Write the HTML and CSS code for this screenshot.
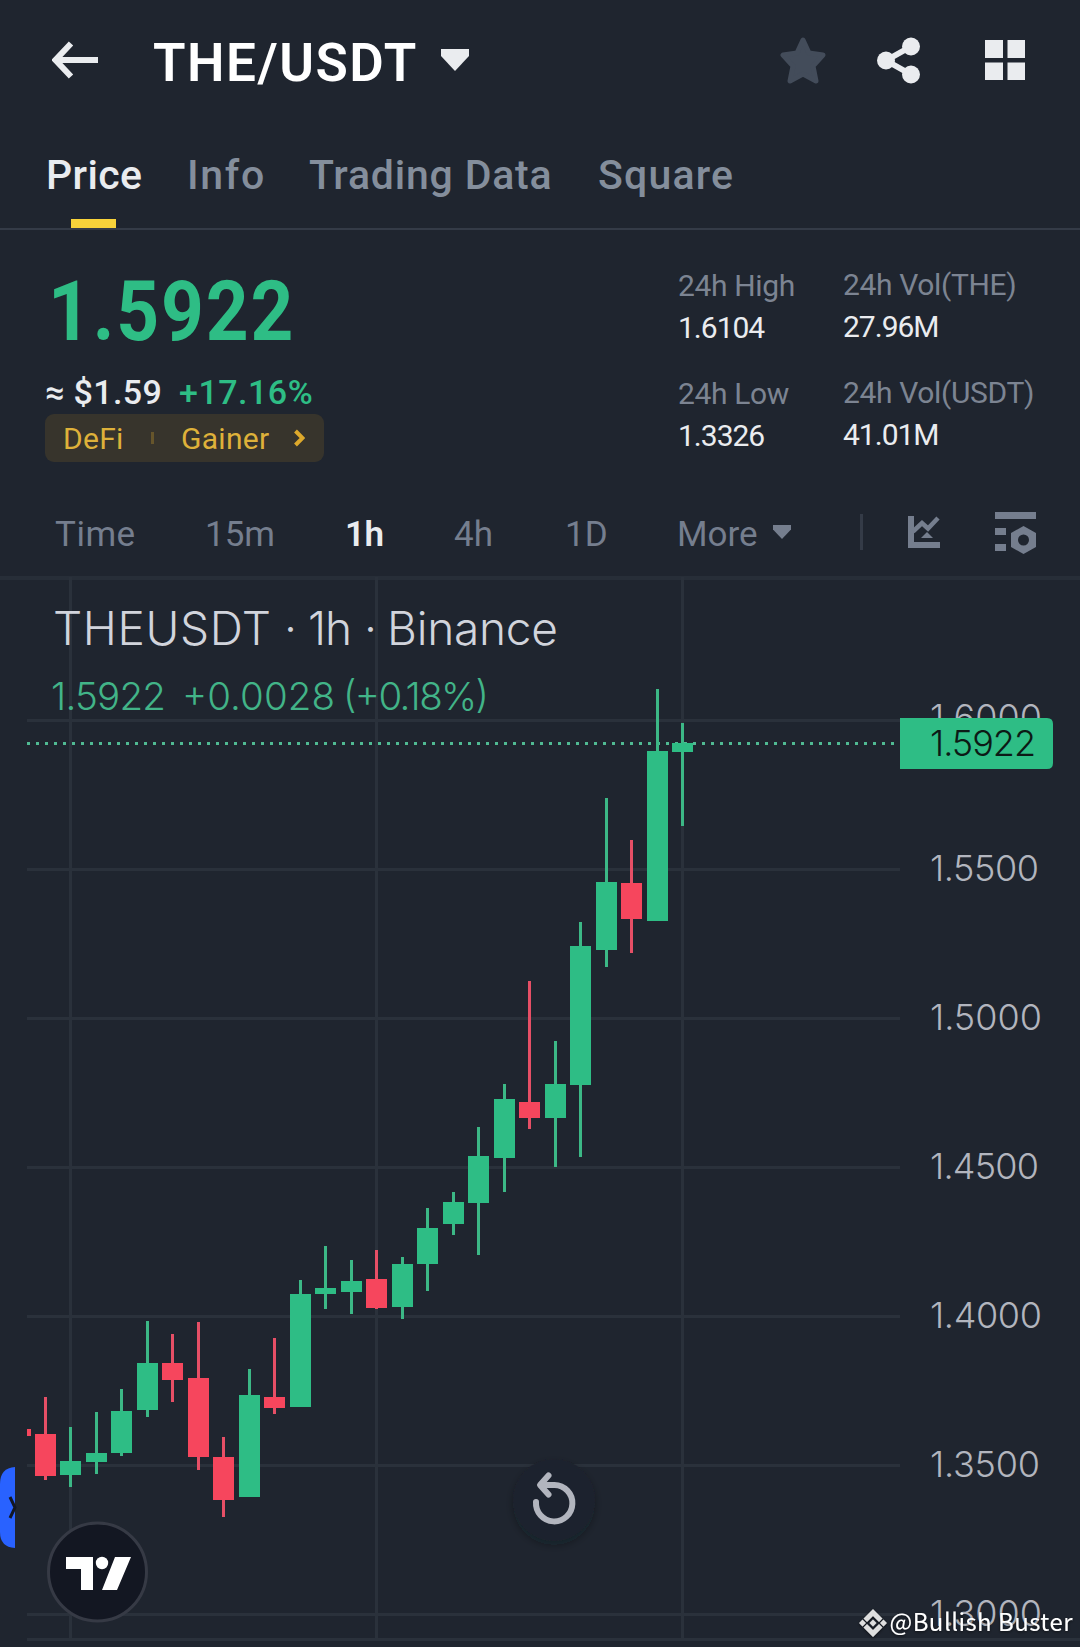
FILE: index.html
```html
<!DOCTYPE html>
<html lang="en">
<head>
<meta charset="utf-8">
<title>THE/USDT</title>
<link rel="stylesheet" href="styles.css">
</head>
<body>
<main class="app">
  <header class="topbar">
    <svg class="back" viewBox="0 0 46 38" width="46" height="38"><path d="M46 19H5M19 2.500L3.500 19L19 35.500" fill="none" stroke="#eaecef" stroke-width="6"/></svg>
    <h1 class="pair">THE/USDT</h1>
    <svg class="caret" viewBox="0 0 28 22" width="28" height="22"><path d="M0 0H28V7L14 22L0 7Z" fill="#eaecef"/></svg>
    <svg class="star" viewBox="0 0 46 48" width="46" height="48"><path d="M23 3L29 16L43 18L33 29L36 44L23 37L10 44L13 29L3 18L17 16Z" fill="#434c5a" stroke="#434c5a" stroke-width="5" stroke-linejoin="round"/></svg>
    <svg class="share" viewBox="0 0 43 47" width="43" height="47"><g fill="#eaecef"><path d="M9 23.500L34 9.500M9 23.500L34 37.500" stroke="#eaecef" stroke-width="6"/><circle cx="9" cy="23.500" r="9"/><circle cx="34" cy="9.500" r="9"/><circle cx="34" cy="37.500" r="9"/></g></svg>
    <svg class="grid" viewBox="0 0 40 40" width="40" height="40"><path d="M0 0H18V18H0ZM22.500 0H40V18H22.500ZM0 22.500H18V40H0ZM22.500 22.500H40V40H22.500Z" fill="#eaecef"/></svg>
  </header>

  <nav class="tabs">
    <a class="tab active">Price</a>
    <a class="tab info">Info</a>
    <a class="tab data">Trading Data</a>
    <a class="tab square">Square</a>
  </nav>

  <section class="summary">
    <div class="quote">
      <div class="last">1.5922</div>
      <div class="change"><span class="fiat">≈ $1.59</span><span class="percent">+17.16%</span></div>
      <div class="tags">
        <span class="defi">DeFi</span><i class="tag-sep"></i><span class="gainer">Gainer</span>
        <svg class="chev" viewBox="0 0 11 18" width="11" height="18"><path d="M1.500 2L8.500 9L1.500 16" fill="none" stroke="#dda92c" stroke-width="4"/></svg>
      </div>
    </div>
    <dl class="stats">
      <div><dt>24h High</dt><dd>1.6104</dd></div>
      <div class="vol"><dt>24h Vol(THE)</dt><dd>27.96M</dd></div>
      <div><dt>24h Low</dt><dd>1.3326</dd></div>
      <div class="vol"><dt>24h Vol(USDT)</dt><dd>41.01M</dd></div>
    </dl>
  </section>

  <nav class="intervals">
    <span class="time">Time</span><span>15m</span><span class="selected">1h</span><span>4h</span><span>1D</span>
    <span class="more">More <svg viewBox="0 0 18 14" width="18" height="14"><path d="M0 0H18V4.500L9 14L0 4.500Z" fill="#757e8e"/></svg></span>
    <i class="rule"></i>
    <svg class="draw" viewBox="0 0 32 32" width="32" height="32"><g fill="#757e8e"><path d="M0 0H6V26H32V32H0Z"/><path d="M5 15.500L14 7L20 12.500L30 2" fill="none" stroke="#757e8e" stroke-width="4.500"/><path d="M13 22L19 16L25 22Z"/></g></svg>
    <svg class="prefs" viewBox="0 0 41 42" width="41" height="42"><path fill="#757e8e" fill-rule="evenodd" d="M0 0H41V7H0ZM0 16H11V23H0ZM0 32H11V39H0ZM28.500 14L41 21V35L28.500 42L16 35V21ZM28.500 22.500A5.500 5.500 0 1 0 28.500 33.500A5.500 5.500 0 1 0 28.500 22.500Z"/></svg>
  </nav>

  <section class="chart">
    <svg class="plot" viewBox="0 576 1080 1071" width="1080" height="1071">
      <defs>
        <filter id="lift" x="-40%" y="-40%" width="180%" height="180%"><feDropShadow dx="0" dy="4" stdDeviation="4" flood-color="#10141c" flood-opacity=".35"/></filter>
        <filter id="ink" x="-10%" y="-20%" width="120%" height="150%"><feDropShadow dx="0" dy="1" stdDeviation="1.500" flood-color="#000" flood-opacity=".6"/></filter>
      </defs>
      <g class="gridlines">
        <path class="frame" d="M0 578H1080"/>
        <path d="M70.500 577V1638M376.500 577V1638M682.500 577V1638"/>
        <path d="M27 720.500H900M27 869.500H900M27 1018.500H900M27 1167.500H900M27 1316.500H900M27 1465.500H900M27 1614.500H900M27 1639.500H1080"/>
      </g>
      <g class="labels">
        <text x="930" y="730" textLength="112">1.6000</text>
        <text x="930" y="881" textLength="109">1.5500</text>
        <text x="930" y="1030" textLength="112">1.5000</text>
        <text x="930" y="1179" textLength="109">1.4500</text>
        <text x="930" y="1328" textLength="112">1.4000</text>
        <text x="930" y="1477" textLength="110">1.3500</text>
        <text x="930" y="1626" textLength="112">1.3000</text>
      </g>
      <path class="last-line" d="M27 743.500H895"/>
      <g class="wicks up">
        <path d="M70.500 1427V1487M96.500 1412V1474M121.500 1389V1456M147.500 1321V1417M249.500 1369V1400M300.500 1280V1300M325.500 1246V1309M351.500 1260V1314M402.500 1257V1319M427.500 1208V1291M453.500 1192V1235M478.500 1127V1255M504.500 1084V1192M555.500 1041V1167M580.500 922V1157M606.500 798V967M657.500 689V760M682.500 723V826"/>
      </g>
      <g class="wicks down">
        <path d="M45.500 1397V1480M172.500 1334V1402M198.500 1322V1470M223.500 1437V1517M274.500 1338V1414M376.500 1250V1309M529.500 981V1129M631.500 840V953"/>
      </g>
      <path class="body-up" d="M60 1461h21v14h-21zM86 1453h21v9h-21zM111 1411h21v42h-21zM137 1363h21v47h-21zM239 1395h21v102h-21zM290 1294h21v113h-21zM315 1288h21v6h-21zM341 1281h21v11h-21zM392 1264h21v43h-21zM417 1228h21v36h-21zM443 1202h21v22h-21zM468 1156h21v47h-21zM494 1099h21v59h-21zM545 1084h21v34h-21zM570 946h21v139h-21zM596 882h21v68h-21zM647 751h21v170h-21zM672 743h21v9h-21z"/>
      <path class="body-down" d="M27 1429h4v7h-4zM35 1434h21v42h-21zM162 1363h21v17h-21zM188 1378h21v79h-21zM213 1457h21v43h-21zM264 1397h21v11h-21zM366 1279h21v29h-21zM519 1102h21v16h-21zM621 883h21v36h-21z"/>
      <g class="title">
        <text x="53" y="645" textLength="218">THEUSDT</text>
        <text x="284" y="645">·</text>
        <text x="308" y="645" textLength="44">1h</text>
        <text x="364" y="645">·</text>
        <text x="387" y="645" textLength="171">Binance</text>
      </g>
      <g class="ohlc">
        <text x="51" y="710" textLength="115">1.5922</text>
        <text x="182" y="710" textLength="153">+0.0028</text>
        <text x="343" y="710" textLength="146">(+0.18%)</text>
      </g>
      <path d="M900 718H1047Q1053 718 1053 724V763Q1053 769 1047 769H900Z" fill="#2ebd85"/>
      <text class="badge" x="930" y="756" textLength="106">1.5922</text>
      <path d="M15 1467Q0 1468 0 1484V1532Q0 1547 15 1548Z" fill="#2962ff"/>
      <path d="M10 1497L15 1507.500L10 1518" fill="none" stroke="#131722" stroke-width="3"/>
      <circle cx="97.500" cy="1572" r="49" fill="#131722" stroke="#363a45" stroke-width="3"/>
      <path d="M66 1557H93V1590H81V1569H66ZM115 1557H131L117 1590H102Z" fill="#fff"/><circle cx="102" cy="1563" r="6.200" fill="#fff"/>
      <circle cx="554" cy="1500" r="41" fill="#1e222d" filter="url(#lift)"/>
      <path d="M536 1502A18.200 18.200 0 1 0 554.500 1485H541M548.500 1475.500L540 1485L548.500 1494.500" fill="none" stroke="#b2b5be" stroke-width="6" stroke-linecap="round" stroke-linejoin="round"/>
      <g filter="url(#ink)">
        <g transform="translate(873 1623)" fill="#dedede"><path d="M0 -14L9.500 -4.500L6 -1L0 -7L-6 -1L-9.500 -4.500ZM0 14L9.500 4.500L6 1L0 7L-6 1L-9.500 4.500ZM-14 0L-10.500 -3.500L-7 0L-10.500 3.500ZM14 0L10.500 -3.500L7 0L10.500 3.500ZM0 -3.500L3.500 0L0 3.500L-3.500 0Z"/></g>
        <text class="author" x="889.500" y="1631" textLength="183">@Bullish Buster</text>
      </g>
    </svg>
  </section>
</main>
</body>
</html>
```
FILE: styles.css
```css
* { box-sizing: border-box; }
body { margin: 0; background: #1f252f; font-family: Roboto, "Liberation Sans", sans-serif; color: #eaecef; }
.app { width: 1080px; height: 1647px; overflow: hidden; }
svg { display: block; flex: none; }

.topbar { display: flex; align-items: center; height: 120px; padding: 0 55px 0 52px; }
.pair { margin: 5px 0 0 55px; width: 265px; font-size: 53px; font-weight: 600; line-height: 60px; letter-spacing: 1.500px; color: #fff; white-space: nowrap; }
.caret { margin-left: 23px; }
.star { margin: 2px 0 0 311px; }
.share { margin-left: 51px; }
.grid { margin-left: auto; }

.tabs { display: grid; grid-template-columns: 140px 123px 288px auto; height: 110px; padding: 27px 0 0 46px; border-bottom: 2px solid #343b47; }
.tab { position: relative; font-size: 41px; font-weight: 500; line-height: 56px; color: #848e9c; white-space: nowrap; }
.active { color: #eaecef; letter-spacing: 0.4px; }
.info { padding-left: 1px; letter-spacing: 1.700px; }
.data { letter-spacing: 0.800px; }
.square { padding-left: 1px; letter-spacing: 1.200px; }
.active::after { content: ""; position: absolute; left: 25px; top: 72px; width: 45px; height: 9px; background: #f8d33a; }

.summary { display: flex; justify-content: space-between; height: 256px; padding: 0 0 0 45px; }
.quote { padding-top: 37px; }
.last { height: 86px; margin-left: 3px; font-size: 83px; font-weight: 700; line-height: 90px; letter-spacing: 2.100px; color: #2ebd85; transform: scaleX(0.9); transform-origin: 0 0; }
.change { display: flex; gap: 17px; height: 61px; padding-top: 17px; font-size: 34px; font-weight: 500; line-height: 44px; letter-spacing: 0.350px; white-space: nowrap; }
.percent { color: #2ebd85; letter-spacing: 0.500px; }
.tags { display: flex; align-items: center; width: 279px; height: 48px; padding-left: 18px; border-radius: 9px; background: #37342c; color: #deb13a; font-size: 30px; line-height: 46px; letter-spacing: 0.300px; }
.tags span { padding-top: 2px; }
.defi { width: 88px; }
.tag-sep { width: 3px; height: 12px; background: #66552b; }
.gainer { width: 113px; margin-left: 27px; }
.stats { display: grid; grid-template-columns: 165px 237px; grid-template-rows: 108px 108px; margin: 0; padding-top: 37px; }
.stats dt { height: 38px; font-size: 30px; line-height: 38px; letter-spacing: -0.350px; color: #7c8492; white-space: nowrap; }
.stats dd { margin: 4px 0 0; height: 38px; font-size: 30px; line-height: 38px; letter-spacing: -1px; }
.vol { margin-top: -1px; }

.intervals { display: grid; grid-template-columns: 150px 140px 109px 111px 112px 183px 48px 87px auto; align-items: center; height: 90px; padding: 8px 0 0 55px; font-size: 35px; line-height: 42px; color: #757e8e; }
.time { letter-spacing: 0.500px; }
.selected { color: #eaecef; font-weight: 600; letter-spacing: -0.500px; }
.more { display: flex; align-items: center; gap: 15px; }
.more svg { margin-top: -7px; }
.rule { width: 3px; height: 36px; margin-top: -7px; background: #343b47; }
.draw { margin-top: -7px; }
.prefs { margin-top: -5px; }

.plot .gridlines { stroke: #2a313b; stroke-width: 3; fill: none; }
.gridlines .frame { stroke: #272e38; stroke-width: 4; }
.plot text { font-family: Inter, "Liberation Sans", sans-serif; font-weight: 300; }
.labels text { font-size: 36px; fill: #b2b5be; }
.plot .badge { font-size: 36px; fill: #0c1a16; }
.title { font-size: 46px; fill: #d1d4dc; }
.ohlc text { font-size: 38.500px; fill: #42b488; }
.last-line { stroke: #50ba93; stroke-width: 3; stroke-dasharray: 3 6; fill: none; }
.wicks { stroke-width: 3; fill: none; }
.up { stroke: #3cb886; }
.down { stroke: #e64f66; }
.body-up { fill: #2ebd85; }
.body-down { fill: #f6465d; }
.plot .author { font-family: "Noto Sans CJK SC", "Noto Sans", sans-serif; font-weight: 400; font-size: 24px; fill: #fff; }
```
